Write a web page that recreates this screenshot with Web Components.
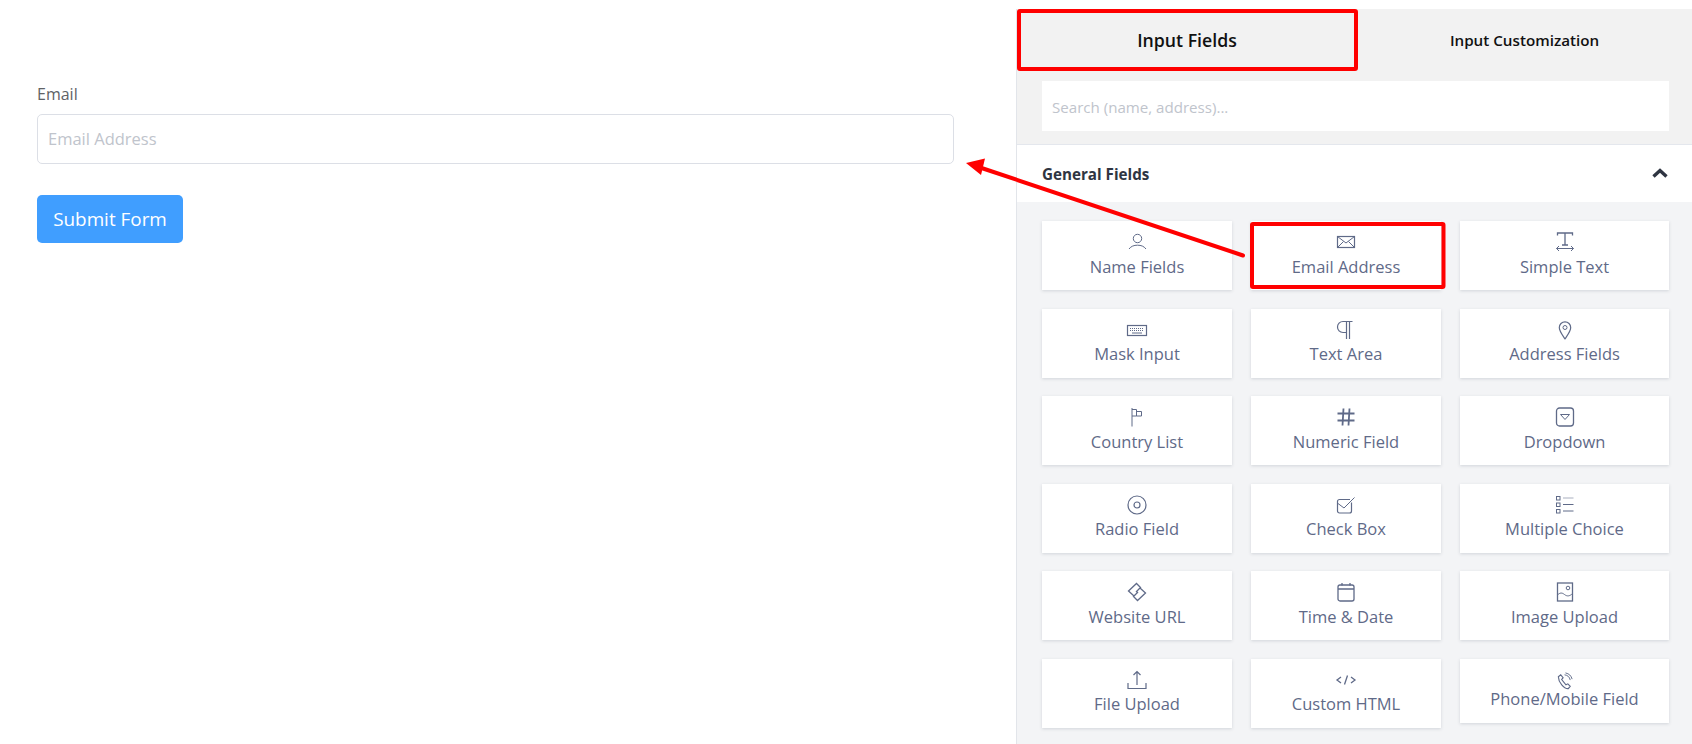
<!DOCTYPE html>
<html lang="en">
<head>
<meta charset="utf-8">
<title>Form builder</title>
<style>
html,body{margin:0;padding:0;background:#fff;}
body{font-family:"Open Sans","Noto Sans",sans-serif;overflow:hidden;height:744px;}
</style>
</head>
<body>
<builder-app>
  <form-preview slot="preview"></form-preview>
  <field-sidebar slot="sidebar">
    <field-card label="Name Fields" icon="name"></field-card>
    <field-card label="Email Address" icon="email"></field-card>
    <field-card label="Simple Text" icon="text"></field-card>
    <field-card label="Mask Input" icon="mask"></field-card>
    <field-card label="Text Area" icon="area"></field-card>
    <field-card label="Address Fields" icon="pin"></field-card>
    <field-card label="Country List" icon="flag"></field-card>
    <field-card label="Numeric Field" icon="hash"></field-card>
    <field-card label="Dropdown" icon="drop"></field-card>
    <field-card label="Radio Field" icon="radio"></field-card>
    <field-card label="Check Box" icon="check"></field-card>
    <field-card label="Multiple Choice" icon="multi"></field-card>
    <field-card label="Website URL" icon="url"></field-card>
    <field-card label="Time &amp; Date" icon="cal"></field-card>
    <field-card label="Image Upload" icon="image"></field-card>
    <field-card label="File Upload" icon="upload"></field-card>
    <field-card label="Custom HTML" icon="html"></field-card>
    <field-card label="Phone/Mobile Field" icon="phone" compact></field-card>
  </field-sidebar>
  <annotation-layer slot="overlay"></annotation-layer>
</builder-app>
<script>
const ICONS = {
  name:'<circle cx="10.500" cy="6.500" r="4.200"/><path d="M2 17C4 14.200 7 13.200 10.500 13.200S17 14.200 19 17"/>',
  email:'<rect x="1.500" y="4.500" width="17" height="11" stroke-width="1.200"/><path d="M1.500 4.500 10 11 18.500 4.500M1.500 15.500 7.500 9.500M18.500 15.500 12.500 9.500"/>',
  text:'<path stroke-width="1.300" d="M2.500 3.500V1H17.500V3.500M10 1V13M7 13H13"/><path d="M1.500 16.500H18.500M4 14 1.500 16.500 4 19M16 14 18.500 16.500 16 19"/>',
  mask:'<rect x="0.500" y="5.500" width="19" height="10" stroke-width="1.200"/><path d="M3 8.500H17M3 10.500H17" stroke-dasharray="1 1"/><path d="M5 13H15"/>',
  area:'<path stroke-width="1.200" d="M16.500 1.500H7C3.800 1.500 1.500 4 1.500 7S3.800 12.500 7 12.500H10.500V1.500M10.500 1.500V19M13.500 1.500V19"/>',
  pin:'<path stroke-width="1.200" d="M10 18.800C7 14.500 4.300 11.200 4.300 7.500A5.700 5.700 0 0 1 15.700 7.500C15.700 11.200 13 14.500 10 18.800Z"/><circle cx="10" cy="7.500" r="2"/>',
  flag:'<path d="M5 1V19.500M5 2.500H9.500V9H5M9.500 4.500H14.500V9H9.500"/>',
  hash:'<path stroke-width="1.800" d="M7.500 1.500 6.500 18.500M13.500 1.500 12.500 18.500M1.500 6.500H18.500M1.500 13.500H18.500"/>',
  drop:'<rect x="1.500" y="1" width="17" height="18" rx="3" stroke-width="1.300"/><path d="M5.500 7.500H14.500L10 12.500Z"/>',
  radio:'<circle cx="10" cy="10" r="9" stroke-width="1.200"/><circle cx="10" cy="10" r="3" stroke-width="1.200"/>',
  check:'<path stroke-width="1.200" d="M15.500 7.500V16C15.500 17.200 14.700 18 13.500 18H3.500C2.300 18 1.500 17.200 1.500 16V6.500C1.500 5.300 2.300 4.500 3.500 4.500H14"/><path d="M2 8.500 8 13 18.500 2.500"/>',
  multi:'<rect x="1.500" y="1.500" width="3.500" height="3.500"/><rect x="1.500" y="8" width="3.500" height="3.500"/><rect x="1.500" y="14.500" width="3.500" height="3.500"/><path d="M8 3H18.500" stroke="#a9afbf"/><path d="M8 9.500H18.500M8 16H18.500"/>',
  url:'<path stroke-width="1.300" d="M7 14 1.500 9 9.500 1.500 13.500 5.500 9 10M13 6 18.500 11 10.500 18.500 6.500 14.500 11 10"/>',
  cal:'<rect x="2" y="3" width="16" height="16" rx="2" stroke-width="1.300"/><path stroke-width="1.300" d="M2 7H18M6 1V3.500M14 1V3.500"/>',
  image:'<rect x="2.500" y="1" width="15" height="18" stroke-width="1.300"/><circle cx="13" cy="6" r="1.800"/><path d="M2.500 13C5 10.500 7 10.500 9.500 12.500S14.500 14.500 17.500 11.500"/>',
  upload:'<path stroke-width="1.200" d="M1 13V18.500H19V13M10 15V1.500M6.500 5 10 1.500 13.500 5"/>',
  html:'<path stroke-width="1.300" d="M5 7 1 10 5 13M15 7 19 10 15 13M11.500 5.500 8.500 14.500"/>',
  phone:'<path stroke-width="1.200" d="M3 5.500 5.500 3.500 8 6.500 6.500 8.500 11 14 13 13 15.500 15.500 13.500 18C9 18.500 3 11 3 5.500Z"/><path d="M9.500 3.500A7 7 0 0 1 15.500 9M10.500 1.500A9 9 0 0 1 17.500 8"/>'
};

class BuilderApp extends HTMLElement{
  constructor(){super();this.attachShadow({mode:'open'}).innerHTML=`
  <style>
    :host{display:flex;position:relative;width:1692px;height:744px;overflow:hidden;}
    .left{flex:0 0 1016px;}
    .right{flex:1;padding-top:9px;min-width:0;}
  </style>
  <div class="left"><slot name="preview"></slot></div>
  <div class="right"><slot name="sidebar"></slot></div>
  <slot name="overlay"></slot>`;}
}
class FormPreview extends HTMLElement{
  constructor(){super();this.attachShadow({mode:'open'}).innerHTML=`
  <style>
    :host{display:block;padding:82px 62px 0 37px;color:#606266;}
    label{display:block;font-size:16px;line-height:24px;height:32px;}
    .input{box-sizing:border-box;height:50px;border:1px solid #dcdfe6;border-radius:5px;padding:0 10px;font-size:16.500px;line-height:48px;color:#c0c4cc;}
    button{display:block;margin-top:31px;box-sizing:border-box;width:146px;height:48px;border:0;border-radius:5px;background:#409eff;color:#fff;font:18.900px/48px "Open Sans","Noto Sans",sans-serif;padding:0;}
  </style>
  <label>Email</label>
  <div class="input">Email Address</div>
  <button type="button">Submit Form</button>`;}
}
class FieldSidebar extends HTMLElement{
  constructor(){super();this.attachShadow({mode:'open'}).innerHTML=`
  <style>
    :host{display:block;height:735px;background:#f3f4f6;border-left:1px solid #e2e5ea;}
    .tabs{display:grid;grid-template-columns:340px 1fr;height:61px;background:#f2f2f2;color:#111;align-items:center;text-align:center;}
    .t1{font-size:17.700px;font-weight:600;}
    .t2{font-size:15.200px;font-weight:600;margin-top:1px;}
    .search{background:#f2f2f2;padding:11px 23px 13px 25px;border-bottom:1px solid #e4e7ed;}
    .search div{background:#fff;height:50px;line-height:52px;padding-left:10px;font-size:15.100px;color:#c0c4cc;}
    .head{display:flex;justify-content:space-between;align-items:center;height:57px;background:#fff;padding:0 24px 0 25px;font-size:15.200px;font-weight:700;color:#2f3542;}
    .head svg{display:block;margin-top:-2px;}
    .grid{display:grid;grid-template-columns:190px 190px 209px;column-gap:19px;row-gap:18.600px;align-items:start;padding:19px 23px 0 25px;}
  </style>
  <div class="tabs"><div class="t1">Input Fields</div><div class="t2">Input Customization</div></div>
  <div class="search"><div>Search (name, address)...</div></div>
  <div class="head"><span>General Fields</span>
    <svg width="16" height="10" viewBox="0 0 16 10" fill="none" stroke="#2f3542" stroke-width="3.400"><path d="M1.500 8.500 8 2.500 14.500 8.500"/></svg></div>
  <div class="grid"><slot></slot></div>`;}
}
class FieldCard extends HTMLElement{
  constructor(){super();this.attachShadow({mode:'open'});}
  connectedCallback(){
    const compact=this.hasAttribute('compact');
    this.shadowRoot.innerHTML=`
    <style>
      :host{display:block;box-sizing:border-box;height:${compact?64:69}px;background:#fff;box-shadow:0 1px 3px rgba(60,70,90,.18);text-align:center;padding-top:11px;color:#5f6a88;font-size:16.500px;}
      .icon{height:${compact?15:20}px;margin-bottom:2.500px;display:flex;justify-content:center;}
      svg{display:block;flex:none;overflow:visible;${compact?'transform:translateY(1px) scale(.95);':''}}
      .label{line-height:24px;white-space:nowrap;}
    </style>
    <div class="icon"><svg width="20" height="20" viewBox="0 0 20 20" fill="none" stroke="#5f6a88" stroke-width="1">${ICONS[this.getAttribute('icon')]||''}</svg></div>
    <div class="label"></div>`;
    this.shadowRoot.querySelector('.label').textContent=this.getAttribute('label');
  }
}
class AnnotationLayer extends HTMLElement{
  constructor(){super();this.attachShadow({mode:'open'}).innerHTML=`
  <style>
    :host{position:absolute;inset:0;pointer-events:none;display:block;}
    svg{position:absolute;left:0;top:0;}
  </style>
  <svg width="1692" height="744" viewBox="0 0 1692 744" fill="none">
    <rect x="1019" y="11" width="337" height="58" rx="1" stroke="#f00" stroke-width="4"/>
    <rect x="1252" y="224" width="191.500" height="63" rx="1" stroke="#f00" stroke-width="4"/>
    <path d="M1243 255.500 980 167.500" stroke="#f00" stroke-width="4" stroke-linecap="round"/>
    <path d="M966 163 985 158.500 981 175Z" fill="#f00"/>
  </svg>`;}
}
customElements.define('builder-app',BuilderApp);
customElements.define('form-preview',FormPreview);
customElements.define('field-sidebar',FieldSidebar);
customElements.define('field-card',FieldCard);
customElements.define('annotation-layer',AnnotationLayer);
</script>
</body>
</html>
